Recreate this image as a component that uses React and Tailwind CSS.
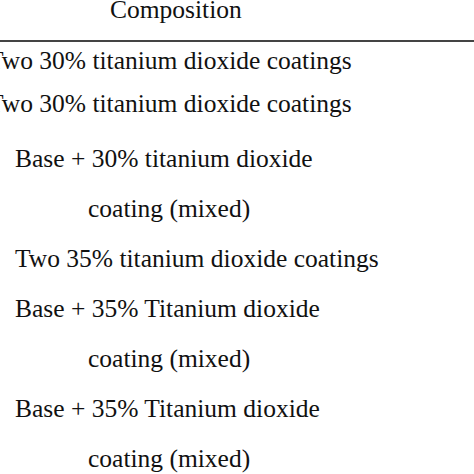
import React from "react";

const rows = [
  { text: "Two 30% titanium dioxide coatings", cls: "ml-[-12px] leading-[37px]" },
  { text: "Two 30% titanium dioxide coatings", cls: "ml-[-12px] leading-[50px]" },
  { text: "Base + 30% titanium dioxide", cls: "ml-[15px] mt-[5px] leading-[50px]" },
  { text: "coating (mixed)", cls: "ml-[88px] leading-[50px]" },
  { text: "Two 35% titanium dioxide coatings", cls: "ml-[15px] leading-[50px]" },
  { text: "Base + 35% Titanium dioxide", cls: "ml-[15px] leading-[50px]" },
  { text: "coating (mixed)", cls: "ml-[88px] leading-[50px]" },
  { text: "Base + 35% Titanium dioxide", cls: "ml-[15px] leading-[50px]" },
  { text: "coating (mixed)", cls: "ml-[88px] leading-[50px]" },
];

export default function App() {
  return (
    <div className="w-[474px] h-[474px] overflow-hidden bg-white text-[#111] text-[25.5px] font-['Liberation_Serif','Times_New_Roman',serif]">
      {/* header */}
      <div className="h-[40px] pl-[110px] leading-[20px]">Composition</div>
      <div className="h-[2px] bg-[#444]" />

      {/* rows */}
      <div className="flex flex-col">
        {rows.map((r, i) => (
          <div key={i} className={"whitespace-nowrap " + r.cls}>
            {r.text}
          </div>
        ))}
      </div>
    </div>
  );
}
